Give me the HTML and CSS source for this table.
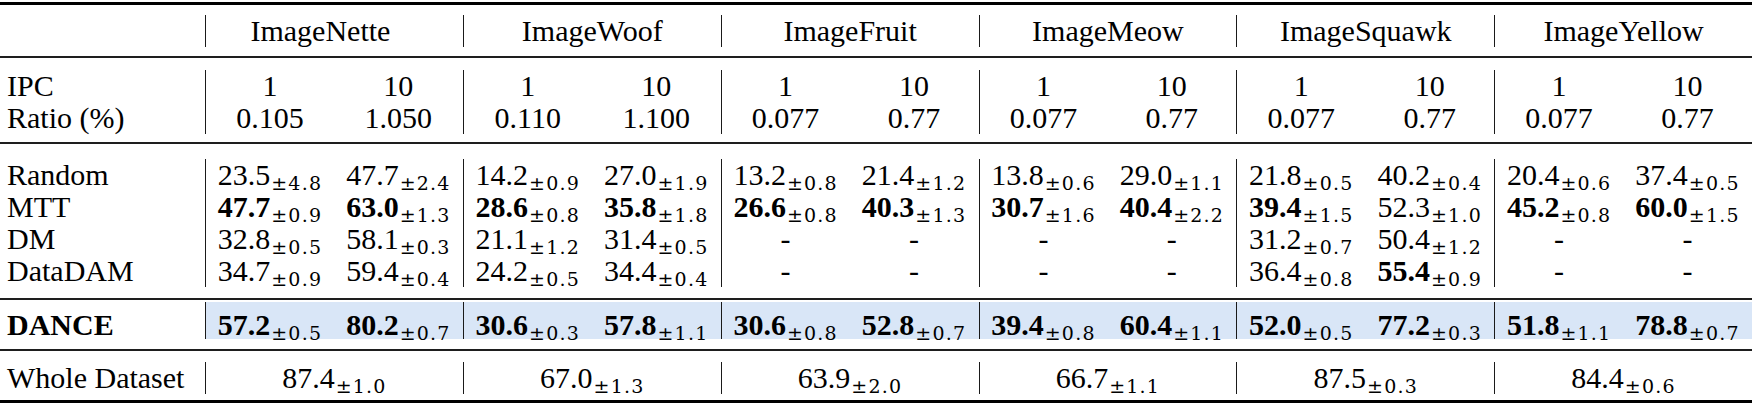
FILE: index.html
```html
<!DOCTYPE html>
<html>
<head>
<meta charset="utf-8">
<link rel="stylesheet" href="styles.css">
</head>
<body>
<div class="table">
  <div class="section sec-head">
    <div class="row r-head">
      <div class="lab"></div>
      <div class="grp span2 first-head">ImageNette</div>
      <div class="grp span2">ImageWoof</div>
      <div class="grp span2">ImageFruit</div>
      <div class="grp span2">ImageMeow</div>
      <div class="grp span2">ImageSquawk</div>
      <div class="grp span2">ImageYellow</div>
    </div>
  </div>
  <div class="rule"></div>
  <div class="section sec-ipc">
    <div class="row r-ipc">
      <div class="lab">IPC</div>
      <div class="c grp">1</div><div class="c">10</div>
      <div class="c grp">1</div><div class="c">10</div>
      <div class="c grp">1</div><div class="c">10</div>
      <div class="c grp">1</div><div class="c">10</div>
      <div class="c grp">1</div><div class="c">10</div>
      <div class="c grp">1</div><div class="c">10</div>
    </div>
    <div class="row r-ipc">
      <div class="lab">Ratio (%)</div>
      <div class="c grp">0.105</div><div class="c">1.050</div>
      <div class="c grp">0.110</div><div class="c">1.100</div>
      <div class="c grp">0.077</div><div class="c">0.77</div>
      <div class="c grp">0.077</div><div class="c">0.77</div>
      <div class="c grp">0.077</div><div class="c">0.77</div>
      <div class="c grp">0.077</div><div class="c">0.77</div>
    </div>
  </div>
  <div class="rule"></div>
  <div class="section sec-data">
    <div class="row r-data">
      <div class="lab">Random</div>
      <div class="c grp">23.5<span class="pm">±4.8</span></div><div class="c">47.7<span class="pm">±2.4</span></div>
      <div class="c grp">14.2<span class="pm">±0.9</span></div><div class="c">27.0<span class="pm">±1.9</span></div>
      <div class="c grp">13.2<span class="pm">±0.8</span></div><div class="c">21.4<span class="pm">±1.2</span></div>
      <div class="c grp">13.8<span class="pm">±0.6</span></div><div class="c">29.0<span class="pm">±1.1</span></div>
      <div class="c grp">21.8<span class="pm">±0.5</span></div><div class="c">40.2<span class="pm">±0.4</span></div>
      <div class="c grp">20.4<span class="pm">±0.6</span></div><div class="c">37.4<span class="pm">±0.5</span></div>
    </div>
    <div class="row r-data">
      <div class="lab">MTT</div>
      <div class="c grp"><b>47.7</b><span class="pm">±0.9</span></div><div class="c"><b>63.0</b><span class="pm">±1.3</span></div>
      <div class="c grp"><b>28.6</b><span class="pm">±0.8</span></div><div class="c"><b>35.8</b><span class="pm">±1.8</span></div>
      <div class="c grp"><b>26.6</b><span class="pm">±0.8</span></div><div class="c"><b>40.3</b><span class="pm">±1.3</span></div>
      <div class="c grp"><b>30.7</b><span class="pm">±1.6</span></div><div class="c"><b>40.4</b><span class="pm">±2.2</span></div>
      <div class="c grp"><b>39.4</b><span class="pm">±1.5</span></div><div class="c">52.3<span class="pm">±1.0</span></div>
      <div class="c grp"><b>45.2</b><span class="pm">±0.8</span></div><div class="c"><b>60.0</b><span class="pm">±1.5</span></div>
    </div>
    <div class="row r-data">
      <div class="lab">DM</div>
      <div class="c grp">32.8<span class="pm">±0.5</span></div><div class="c">58.1<span class="pm">±0.3</span></div>
      <div class="c grp">21.1<span class="pm">±1.2</span></div><div class="c">31.4<span class="pm">±0.5</span></div>
      <div class="c grp">-</div><div class="c">-</div>
      <div class="c grp">-</div><div class="c">-</div>
      <div class="c grp">31.2<span class="pm">±0.7</span></div><div class="c">50.4<span class="pm">±1.2</span></div>
      <div class="c grp">-</div><div class="c">-</div>
    </div>
    <div class="row r-data">
      <div class="lab">DataDAM</div>
      <div class="c grp">34.7<span class="pm">±0.9</span></div><div class="c">59.4<span class="pm">±0.4</span></div>
      <div class="c grp">24.2<span class="pm">±0.5</span></div><div class="c">34.4<span class="pm">±0.4</span></div>
      <div class="c grp">-</div><div class="c">-</div>
      <div class="c grp">-</div><div class="c">-</div>
      <div class="c grp">36.4<span class="pm">±0.8</span></div><div class="c"><b>55.4</b><span class="pm">±0.9</span></div>
      <div class="c grp">-</div><div class="c">-</div>
    </div>
  </div>
  <div class="rule"></div>
  <div class="section sec-ours">
    <div class="row r-ours">
      <div class="lab"><b>DANCE</b></div>
      <div class="c grp hl"><b>57.2</b><span class="pm">±0.5</span></div><div class="c hl"><b>80.2</b><span class="pm">±0.7</span></div>
      <div class="c grp hl"><b>30.6</b><span class="pm">±0.3</span></div><div class="c hl"><b>57.8</b><span class="pm">±1.1</span></div>
      <div class="c grp hl"><b>30.6</b><span class="pm">±0.8</span></div><div class="c hl"><b>52.8</b><span class="pm">±0.7</span></div>
      <div class="c grp hl"><b>39.4</b><span class="pm">±0.8</span></div><div class="c hl"><b>60.4</b><span class="pm">±1.1</span></div>
      <div class="c grp hl"><b>52.0</b><span class="pm">±0.5</span></div><div class="c hl"><b>77.2</b><span class="pm">±0.3</span></div>
      <div class="c grp hl"><b>51.8</b><span class="pm">±1.1</span></div><div class="c hl"><b>78.8</b><span class="pm">±0.7</span></div>
    </div>
  </div>
  <div class="rule"></div>
  <div class="section sec-whole">
    <div class="row r-whole">
      <div class="lab">Whole Dataset</div>
      <div class="c grp span2">87.4<span class="pm">±1.0</span></div>
      <div class="c grp span2">67.0<span class="pm">±1.3</span></div>
      <div class="c grp span2">63.9<span class="pm">±2.0</span></div>
      <div class="c grp span2">66.7<span class="pm">±1.1</span></div>
      <div class="c grp span2">87.5<span class="pm">±0.3</span></div>
      <div class="c grp span2">84.4<span class="pm">±0.6</span></div>
    </div>
  </div>
</div>
</body>
</html>
```
FILE: styles.css
```css
html, body {
  margin: 0;
  padding: 0;
  background: #fff;
}
body {
  font-family: "Liberation Serif", "Times New Roman", serif;
  font-size: 30px;
  color: #000;
}
.table {
  width: 1752px;
  margin-top: 2px;
  border-top: 3px solid #000;
  border-bottom: 3px solid #000;
}
.rule {
  height: 2px;
  background: #1e1e1e;
}
.section {
  display: flex;
  flex-direction: column;
}
.row {
  display: grid;
  grid-template-columns: 205px repeat(12, 1fr);
  box-sizing: border-box;
}
.lab {
  padding-left: 7px;
  white-space: nowrap;
}
.c {
  text-align: center;
  white-space: nowrap;
}
.span2 {
  grid-column: span 2;
  text-align: center;
}
.first-head {
  padding-right: 28px;
}
.grp {
  border-left: 1px solid #1a1a1a;
}
.pm {
  font-family: "DejaVu Serif", serif;
  font-size: 19px;
  font-weight: normal;
  letter-spacing: 1.2px;
  position: relative;
  top: 5px;
  line-height: 0;
  margin-left: 1px;
}
b { font-weight: bold; }

/* header */
.sec-head { padding: 10px 0 9px; }
.r-head { height: 32px; line-height: 32px; }

/* IPC / ratio */
.sec-ipc { padding: 12px 0 8px; }
.r-ipc { height: 32px; line-height: 32px; }

/* baselines */
.sec-data { padding: 15px 0 11px; }
.r-data { height: 32px; line-height: 32px; }

/* ours */
.sec-ours { padding: 2px 0 10px; }
.r-ours { height: 37px; line-height: 29px; }
.r-ours > div { padding-top: 8px; }
.hl { background: #d9e6f7; }

/* whole dataset */
.sec-whole { padding: 11px 0 6px; }
.r-whole { height: 32px; line-height: 32px; }
```
